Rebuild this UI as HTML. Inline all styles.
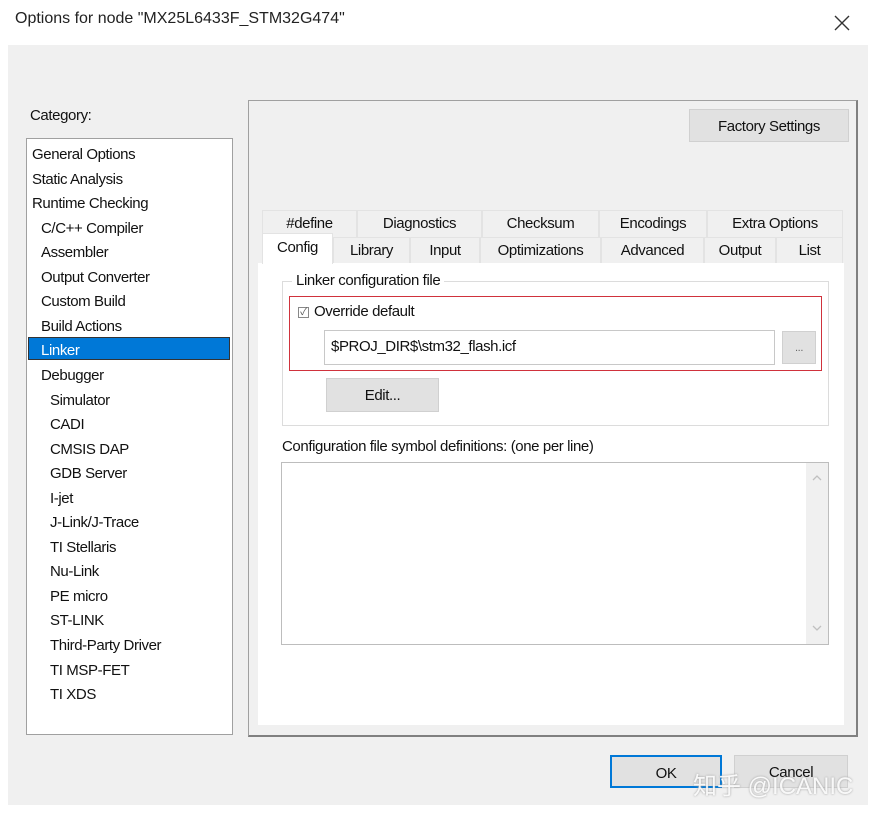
<!DOCTYPE html>
<html><head><meta charset="utf-8"><style>
*{margin:0;padding:0;box-sizing:border-box}
body{width:890px;height:820px;background:#fff;position:relative;overflow:hidden;font-family:"Liberation Sans","Noto Sans CJK SC",sans-serif;color:#111;font-size:15px;letter-spacing:-0.4px}
.a{position:absolute}
.t{position:absolute;white-space:nowrap}
.btn{position:absolute;background:#e1e1e1;border:1px solid #d0d0d0;text-align:center}
.tab{position:absolute;height:27px;line-height:26px;text-align:center;background:#f0f0f0;border:1px solid #e3e3e3;border-bottom:none}
</style></head><body>
<div class="t" style="left:15px;top:10px;font-size:16px;color:#222;letter-spacing:0">Options for node "MX25L6433F_STM32G474"</div>
<svg class="a" style="left:833px;top:14px" width="18" height="18"><path d="M2 2L16 16M16 2L2 16" stroke="#333" stroke-width="1.4"/></svg>
<div class="a" style="left:8px;top:45px;width:860px;height:760px;background:#f0f0f0"></div>
<div class="t" style="left:30px;top:107px">Category:</div>
<div class="a" style="left:26px;top:138px;width:207px;height:597px;background:#fff;border:1px solid #a0a0a0"></div>
<div class="a" style="left:28px;top:337px;width:202px;height:23px;background:#0078d7;border:1px solid #333"></div>
<div class="t" style="left:32px;top:143px;line-height:24.55px">General Options<br>Static Analysis<br>Runtime Checking</div>
<div class="t" style="left:41px;top:216.6px;line-height:24.55px">C/C++ Compiler<br>Assembler<br>Output Converter<br>Custom Build<br>Build Actions<br><span style="color:#fff">Linker</span><br>Debugger</div>
<div class="t" style="left:50px;top:388.5px;line-height:24.55px">Simulator<br>CADI<br>CMSIS DAP<br>GDB Server<br>I-jet<br>J-Link/J-Trace<br>TI Stellaris<br>Nu-Link<br>PE micro<br>ST-LINK<br>Third-Party Driver<br>TI MSP-FET<br>TI XDS</div>
<div class="a" style="left:248px;top:100px;width:610px;height:637px;border:1px solid #a0a0a0;border-right:2px solid #808080;border-bottom:2px solid #808080"></div>
<div class="btn" style="left:689px;top:109px;width:160px;height:33px;line-height:33px">Factory Settings</div>
<div class="tab" style="left:262px;top:210px;width:95px">#define</div>
<div class="tab" style="left:357px;top:210px;width:125px">Diagnostics</div>
<div class="tab" style="left:482px;top:210px;width:117px">Checksum</div>
<div class="tab" style="left:599px;top:210px;width:108px">Encodings</div>
<div class="tab" style="left:707px;top:210px;width:136px">Extra Options</div>
<div class="tab" style="left:333px;top:237px;width:77px">Library</div>
<div class="tab" style="left:410px;top:237px;width:70px">Input</div>
<div class="tab" style="left:480px;top:237px;width:121px">Optimizations</div>
<div class="tab" style="left:601px;top:237px;width:103px">Advanced</div>
<div class="tab" style="left:704px;top:237px;width:72px">Output</div>
<div class="tab" style="left:776px;top:237px;width:67px">List</div>
<div class="a" style="left:258px;top:263px;width:586px;height:462px;background:#fff"></div>
<div class="tab" style="left:262px;top:233px;width:71px;height:31px;background:#fff;line-height:28px">Config</div>
<div class="a" style="left:282px;top:281px;width:547px;height:145px;border:1px solid #dcdcdc"></div>
<div class="t" style="left:292px;top:272px;background:#fff;padding:0 4px">Linker configuration file</div>
<div class="a" style="left:289px;top:296px;width:533px;height:75px;border:1.5px solid #d0323c"></div>
<div class="a" style="left:298px;top:307px;width:11px;height:11px;border:1px solid #888;font-size:10px;line-height:9px;text-align:center;color:#555">✓</div>
<div class="t" style="left:314px;top:303px">Override default</div>
<div class="a" style="left:324px;top:330px;width:451px;height:35px;border:1px solid #c8c8c8;background:#fff"></div>
<div class="t" style="left:331px;top:338px">$PROJ_DIR$\stm32_flash.icf</div>
<div class="btn" style="left:782px;top:331px;width:34px;height:33px;line-height:33px;font-size:11px;color:#666">...</div>
<div class="btn" style="left:326px;top:378px;width:113px;height:34px;line-height:34px">Edit...</div>
<div class="t" style="left:282px;top:438px">Configuration file symbol definitions: (one per line)</div>
<div class="a" style="left:281px;top:462px;width:548px;height:183px;border:1px solid #bdbdbd"></div>
<div class="a" style="left:806px;top:463px;width:22px;height:181px;background:#f0f0f0"></div>
<svg class="a" style="left:811px;top:473px" width="12" height="10"><path d="M2 7L6 3L10 7" stroke="#c0c0c0" fill="none" stroke-width="1.3"/></svg>
<svg class="a" style="left:811px;top:623px" width="12" height="10"><path d="M2 3L6 7L10 3" stroke="#c0c0c0" fill="none" stroke-width="1.3"/></svg>
<div class="btn" style="left:610px;top:755px;width:112px;height:33px;line-height:33px;border:2px solid #0078d7">OK</div>
<div class="btn" style="left:734px;top:755px;width:114px;height:33px;line-height:33px">Cancel</div>
<div class="t" style="left:693px;top:766px;font-size:24px;color:rgba(255,255,255,0.9);text-shadow:0 0 2px #999;letter-spacing:0">知乎 @ICANIC</div>
</body></html>
